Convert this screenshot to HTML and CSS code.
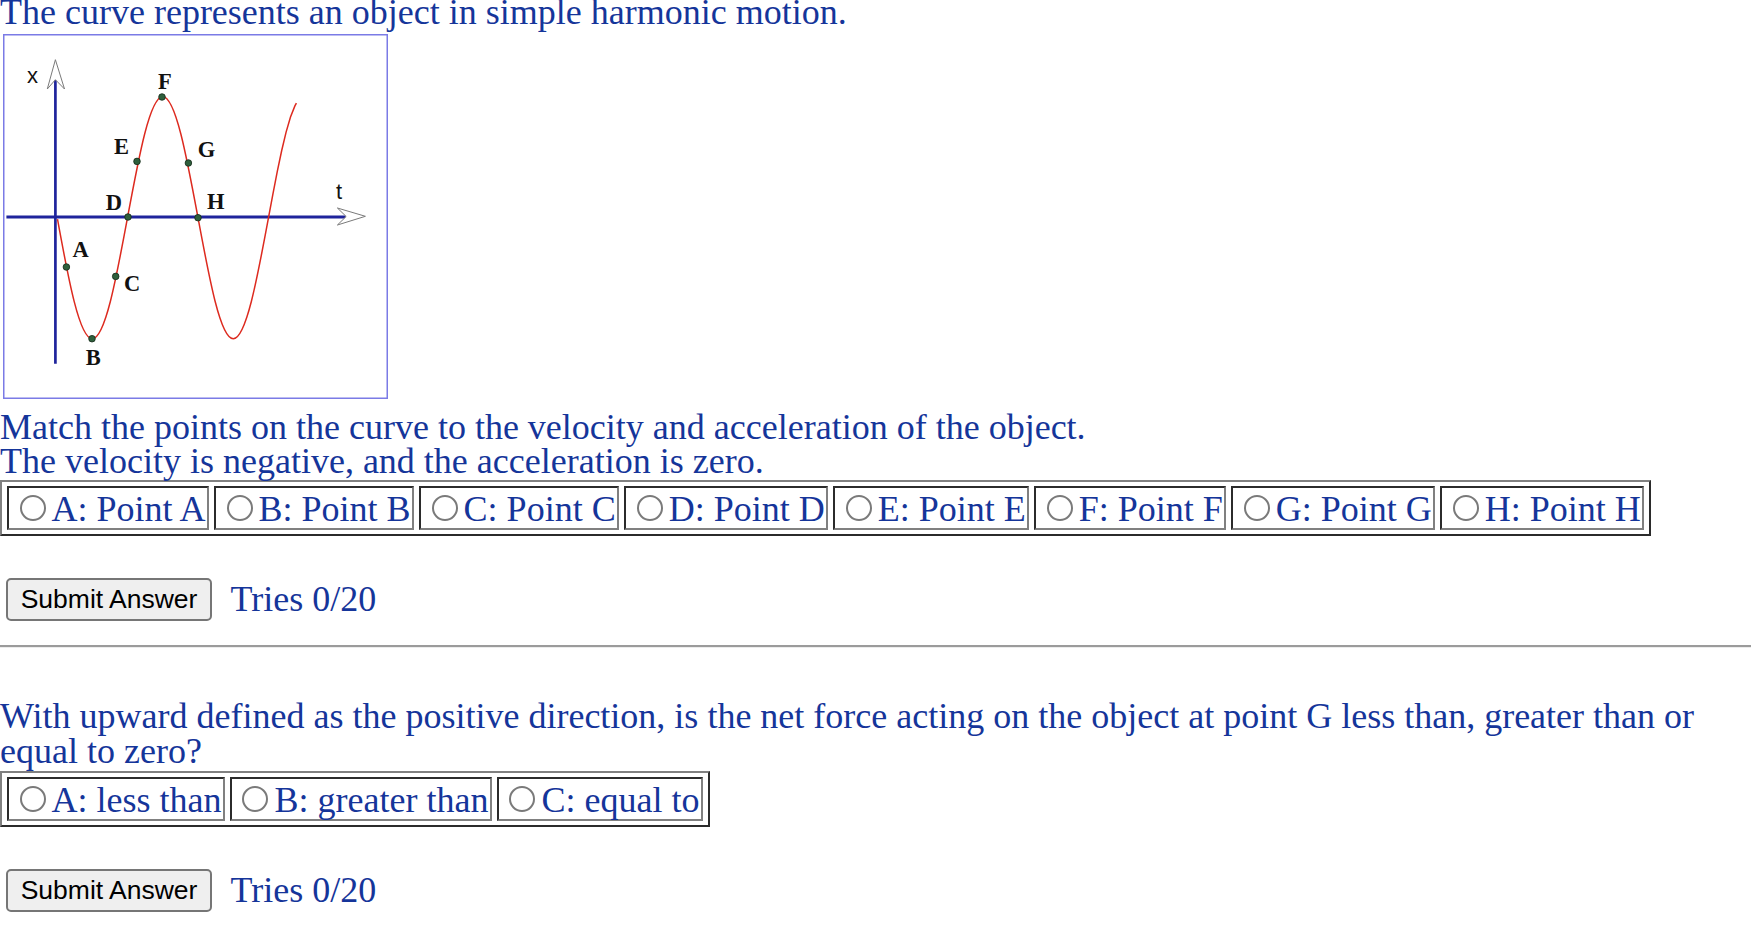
FILE: index.html
```html
<!DOCTYPE html>
<html lang="en">
<head>
<meta charset="utf-8">
<title>Simple harmonic motion</title>
<link rel="stylesheet" href="styles.css">
</head>
<body>
<div class="title">The curve represents an object in simple harmonic motion.</div>
<div class="figure">
  <svg width="385" height="365" viewBox="3.3 34.3 385 365" xmlns="http://www.w3.org/2000/svg">
    <rect x="4.05" y="35.05" width="383.5" height="363.5" fill="#fff" stroke="#7b7be6" stroke-width="1.5"/>
    <!-- axes -->
    <line x1="6.7" y1="217.3" x2="346" y2="217.3" stroke="#1f249c" stroke-width="2.8"/>
    <line x1="55.7" y1="364" x2="55.7" y2="79" stroke="#1f249c" stroke-width="2.7"/>
    <polygon points="365.7,216.6 337.7,208.3 346.5,216.8 337.7,225.3" fill="#fff" stroke="#7a7a7a" stroke-width="1"/>
    <polygon points="55.7,60 47.6,89.3 55.7,80 64.8,89.3" fill="#fff" stroke="#7a7a7a" stroke-width="1"/>
    <!-- curve -->
    <path d="M57.8,219.5 C68.8,280 79.79,339 92.55,339 C105.31,339 116.3,280 127.8,218 C139.3,156 150.29,97 163.05,97 C175.81,97 186.8,156 198.3,218 C209.8,280 220.79,339 233.55,339 C246.31,339 257.3,280 268.8,218 L273.2,194.4 L277.6,171.7 L282,150.8 L286.4,132.4 L290.8,117.4 L295.2,106.2 L296.7,103.5" fill="none" stroke="#dd2a1f" stroke-width="1.5"/>
    <!-- points -->
    <g fill="#2e5f3c" stroke="#142a18" stroke-width="0.8">
      <circle cx="162.3" cy="97.3" r="3.3"/>
      <circle cx="137.3" cy="161.7" r="3.3"/>
      <circle cx="188.7" cy="163.3" r="3.3"/>
      <circle cx="128.3" cy="217.3" r="3.3"/>
      <circle cx="198.3" cy="218" r="3.3"/>
      <circle cx="66.7" cy="267.3" r="3.3"/>
      <circle cx="116" cy="276.7" r="3.3"/>
      <circle cx="92.3" cy="339" r="3.3"/>
    </g>
    <!-- labels -->
    <g class="pt-label">
      <text x="158.3" y="89.3">F</text>
      <text x="114.3" y="154">E</text>
      <text x="198" y="157.3">G</text>
      <text x="106" y="210">D</text>
      <text x="207.3" y="209.3">H</text>
      <text x="72.7" y="257.7">A</text>
      <text x="124.3" y="291.7">C</text>
      <text x="86" y="365.7">B</text>
    </g>
    <text class="axis-label" x="27.3" y="83.3">x</text>
    <text class="axis-label" x="336.3" y="199.3">t</text>
  </svg>
</div>
<div class="q q1">Match the points on the curve to the velocity and acceleration of the object.<br>The velocity is negative, and the acceleration is zero.</div>
<table class="choices choices-1">
  <tr>
    <td><span class="radio"></span>A: Point A</td>
    <td><span class="radio"></span>B: Point B</td>
    <td><span class="radio"></span>C: Point C</td>
    <td><span class="radio"></span>D: Point D</td>
    <td><span class="radio"></span>E: Point E</td>
    <td><span class="radio"></span>F: Point F</td>
    <td><span class="radio"></span>G: Point G</td>
    <td><span class="radio"></span>H: Point H</td>
  </tr>
</table>
<div class="submit-row">
  <button class="submit" type="button">Submit Answer</button>
  <span class="tries">Tries 0/20</span>
</div>
<hr class="sep">
<div class="q q2">With upward defined as the positive direction, is the net force acting on the object at point G less than, greater than or equal to zero?</div>
<table class="choices choices-2">
  <tr>
    <td><span class="radio"></span>A: less than</td>
    <td><span class="radio"></span>B: greater than</td>
    <td><span class="radio"></span>C: equal to</td>
  </tr>
</table>
<div class="submit-row">
  <button class="submit" type="button">Submit Answer</button>
  <span class="tries">Tries 0/20</span>
</div>
</body>
</html>
```

FILE: styles.css
```css
html, body {
  margin: 0;
  padding: 0;
  background: #fff;
}

body {
  font-family: "Liberation Serif", "Times New Roman", serif;
  font-size: 36px;
  line-height: 33.5px;
  color: #15359a;
}

.title {
  margin-top: -4.2px;
  white-space: nowrap;
}

.figure {
  margin: 4.9px 0 0 3.3px;
  width: 385px;
  height: 365px;
}

.figure svg {
  display: block;
}

.pt-label text {
  font-family: "Liberation Serif", "Times New Roman", serif;
  font-weight: bold;
  font-size: 22.5px;
  fill: #111;
}

.axis-label {
  font-family: "Liberation Sans", Arial, sans-serif;
  font-size: 22px;
  fill: #111;
}

.q1 {
  margin-top: 11.8px;
}

.choices {
  border-collapse: separate;
  border-spacing: 5px 4px;
  border: 2px solid;
  border-color: #808080 #2b2b2b #2b2b2b #808080;
}

.choices-1 {
  margin-top: 2.2px;
}

.choices td {
  border: 2px solid;
  border-color: #2b2b2b #808080 #808080 #2b2b2b;
  padding: 4.9px 1.5px 1.8px 2px;
  white-space: nowrap;
}

.radio {
  display: inline-block;
  width: 26px;
  height: 26px;
  box-sizing: border-box;
  border: 2px solid #7a7a7a;
  border-radius: 50%;
  background: #fff;
  margin: 0 6px 0 8.5px;
  vertical-align: baseline;
}

.submit-row {
  display: flex;
  align-items: center;
  margin-top: 41.6px;
}

.submit {
  font-family: "Liberation Sans", Arial, Helvetica, sans-serif;
  font-size: 26.5px;
  line-height: normal;
  height: 42.7px;
  padding: 0 13px;
  margin: 0 0 0 5.7px;
  border: 2px solid #767676;
  border-radius: 5px;
  background: #efefef;
  color: #000;
}

.tries {
  margin-left: 18px;
}

.sep {
  margin: 24.3px 0 0;
  height: 0;
  border: 0;
  border-top: 2px solid #9b9b9b;
  border-bottom: 1px solid #ececec;
}

.q2 {
  margin-top: 51.5px;
  line-height: 34.5px;
}

.choices-2 {
  margin-top: 2.8px;
}
```
